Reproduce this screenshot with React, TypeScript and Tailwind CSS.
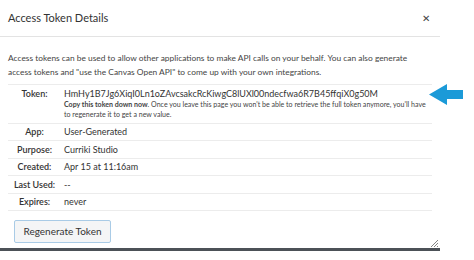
const TOKEN = "HmHy1B7Jg6XiqI0Ln1oZAvcsakcRcKiwgC8lUXl00ndecfwa6R7B45ffqiX0g50M";

const rows = [
  { label: "App:", value: "User-Generated" },
  { label: "Purpose:", value: "Curriki Studio" },
  { label: "Created:", value: "Apr 15 at 11:16am" },
  { label: "Last Used:", value: "--" },
  { label: "Expires:", value: "never" },
];

function Arrow() {
  return (
    <svg width="34" height="21" viewBox="0 0 34 21" className="absolute left-[429px] top-[84px]">
      <path d="M0 10.5 L18 0 L18 6 L34 6 L34 15 L18 15 L18 21 Z" fill="#1b9ad8" />
    </svg>
  );
}

export default function App() {
  return (
    <div className="relative w-[474px] h-[260px] bg-white overflow-hidden font-['Lato','Liberation_Sans',sans-serif] text-[#333]">
      <div className="w-[440px] flex flex-col">
        <div className="h-[37px] flex items-center justify-between pl-2 pr-[10px] border-b border-[#e3e3e3]">
          <span className="text-[11px] text-[#333]">Access Token Details</span>
          <span className="text-[10px] leading-none text-[#444]">✕</span>
        </div>

        <div className="px-2">
          <p className="pt-[14px] text-[8.4px] leading-[14px] text-[#444]">
            Access tokens can be used to allow other applications to make API calls on your behalf. You can also generate
            access tokens and "use the Canvas Open API" to come up with your own integrations.
          </p>

          <div className="mt-[5px] border-t border-[#ececec] w-[424px]">
            <div className="flex border-b border-[#ececec] pt-[3px] pb-[3px]">
              <div className="w-[53px] text-center text-[9px] leading-[12px] font-semibold">Token:</div>
              <div className="flex-1 pl-[3px]">
                <div className="text-[9px] leading-[11px] mb-[1px]">{TOKEN}</div>
                <div className="text-[7.05px] leading-[10px] text-[#444]">
                  <span className="font-bold">Copy this token down now</span>. Once you leave this page you won't be able to
                  retrieve the full token anymore, you'll have to regenerate it to get a new value.
                </div>
              </div>
            </div>
            {rows.map((r) => (
              <div key={r.label} className="flex items-center h-[17.4px] border-b border-[#ececec]">
                <div className="w-[53px] text-center text-[9px] font-semibold">{r.label}</div>
                <div className="flex-1 pl-[3px] text-[9px]">{r.value}</div>
              </div>
            ))}
          </div>

          <div className="pt-[6px] pl-[6px]">
            <button className="h-[23px] w-[97px] rounded-[2px] border border-[#a9cbe6] bg-[#f4f5f6] text-[10px] text-[#333]">
              Regenerate Token
            </button>
          </div>
        </div>

        <div className="relative mt-[5px] h-[3px] bg-[#4c5157]">
          <svg width="8" height="8" viewBox="0 0 8 8" className="absolute right-[2px] bottom-[4px]">
            <path d="M1 8 L8 1 M4 8 L8 4 M7 8 L8 7" stroke="#777" strokeWidth="0.9" />
          </svg>
        </div>
      </div>
      <Arrow />
    </div>
  );
}
